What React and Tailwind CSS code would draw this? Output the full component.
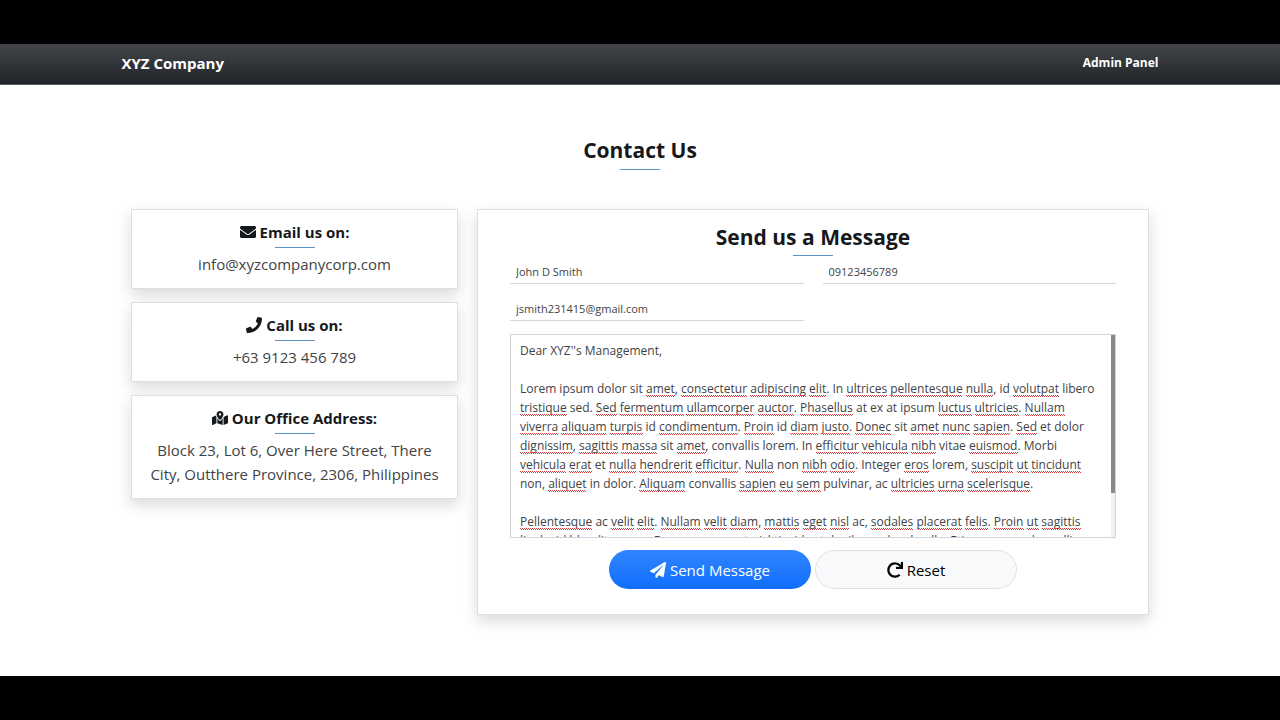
import React, { useLayoutEffect, useRef, useState } from "react";
import { FaEnvelope, FaPhone, FaMapMarkedAlt, FaPaperPlane, FaRedo } from "react-icons/fa";

// Words between underscores are the ones the spell checker flags.
const MESSAGE = `Dear XYZ''s Management,

Lorem ipsum dolor sit _amet_, _consectetur_ _adipiscing_ _elit_. In _ultrices_ _pellentesque_ _nulla_, id _volutpat_ libero _tristique_ sed. _Sed_ _fermentum_ _ullamcorper_ _auctor_. _Phasellus_ at ex at ipsum _luctus_ _ultricies_. _Nullam_ _viverra_ _aliquam_ _turpis_ id _condimentum_. _Proin_ id _diam_ _justo_. _Donec_ sit _amet_ _nunc_ _sapien_. _Sed_ et dolor _dignissim_, _sagittis_ _massa_ sit _amet_, convallis lorem. In _efficitur_ _vehicula_ _nibh_ vitae _euismod_. Morbi _vehicula_ _erat_ et _nulla_ _hendrerit_ _efficitur_. _Nulla_ non _nibh_ _odio_. Integer _eros_ lorem, _suscipit_ _ut_ _tincidunt_ non, _aliquet_ in dolor. _Aliquam_ convallis _sapien_ _eu_ _sem_ pulvinar, ac _ultricies_ _urna_ _scelerisque_.

_Pellentesque_ ac _velit_ _elit_. _Nullam_ _velit_ _diam_, _mattis_ _eget_ _nisl_ ac, _sodales_ _placerat_ _felis_. _Proin_ _ut_ _sagittis_ ligula, id blandit massa. Donec ac urna et nisl tincidunt dapibus vel sed nulla. Etiam commodo mollis lacus, sed dictum velit porta vel. Vivamus non lorem vitae dolor luctus tempor. Integer eu mauris in sapien tempus feugiat at non purus.`;

const pieces = MESSAGE.split("_");
const plainMessage = pieces.join("");

const lineStyle = "mx-auto h-px w-10 bg-[#5c93c4]";
const cardStyle = "border border-[#dfdfdf] bg-white shadow-[0_6px_14px_rgba(0,0,0,0.15)]";
const messageText =
  "h-[204px] w-full border pt-[6px] pr-[15px] pb-[5px] pl-[9px] text-[12px] leading-[19px] whitespace-pre-wrap break-words";

function InfoCard({ icon: Icon, title, children }) {
  return (
    <section className={`${cardStyle} px-3 pt-[11px] pb-3 text-center`}>
      <h2 className="flex items-center justify-center gap-1 text-[15px] leading-[22px] font-bold">
        <Icon className="size-4" aria-hidden="true" />
        {title}
      </h2>
      <div className={`${lineStyle} mt-1 mb-1`} />
      <div className="text-[15px] leading-6 text-[#3f4346]">{children}</div>
    </section>
  );
}

function Field({ label, ...props }) {
  return (
    <input
      aria-label={label}
      className="h-6 w-full min-w-0 border-b border-[#d5d8db] px-[6px] text-[11px] leading-4 text-[#3f4346] outline-none"
      {...props}
    />
  );
}

// Two rows of alternating dots, the shape of a small spelling mark.
function squiggle(x, y, width) {
  let d = "";
  for (let dx = 0; dx < width; dx += 1) {
    d += `M${x + dx} ${y + 0.5 + (dx % 2)}h1`;
  }
  return d;
}

function MessageBox() {
  const measure = useRef(null);
  const field = useRef(null);
  const [marks, setMarks] = useState([]);
  const [edited, setEdited] = useState(false);
  const [scroll, setScroll] = useState({ top: 0, view: 1, full: 1 });

  const readScroll = () => {
    const el = field.current;
    setScroll({ top: el.scrollTop, view: el.clientHeight, full: el.scrollHeight });
  };

  useLayoutEffect(() => {
    const update = () => {
      const box = measure.current;
      const origin = box.getBoundingClientRect();
      const words = [...box.querySelectorAll("span")];
      setMarks(
        words.map((word) => {
          const r = word.getBoundingClientRect();
          return squiggle(
            Math.round(r.left - origin.left),
            Math.round(r.bottom - origin.top) - 2,
            Math.round(r.width)
          );
        })
      );
      readScroll();
    };
    update();
    const observer = new ResizeObserver(update);
    observer.observe(field.current);
    return () => observer.disconnect();
  }, []);

  return (
    <div className="relative mt-[13px]">
      <textarea
        ref={field}
        aria-label="Message"
        defaultValue={plainMessage}
        spellCheck={false}
        onChange={() => { setEdited(true); readScroll(); }}
        onScroll={readScroll}
        className={`${messageText} block resize-none overflow-y-scroll border-[#ced4da] text-[#3f4346] outline-none [scrollbar-width:none]`}
      />
      <div
        ref={measure}
        aria-hidden="true"
        className={`${messageText} pointer-events-none invisible absolute inset-0 overflow-hidden border-transparent`}
      >
        {pieces.map((piece, i) => (i % 2 ? <span key={i}>{piece}</span> : piece))}
      </div>
      <div className="pointer-events-none absolute inset-px overflow-hidden" aria-hidden="true">
        {!edited && (
          <svg
            className="absolute inset-0 size-full overflow-visible"
            style={{ transform: `translate(-1px, ${-1 - scroll.top}px)` }}
            fill="none"
            stroke="#d63a3a"
            strokeWidth="1"
          >
            <path d={marks.join("")} />
          </svg>
        )}
        <div className="absolute inset-y-0 right-0 w-1 bg-[#f1f1f1]">
          <div
            className="w-full bg-[#888888]"
            style={{
              height: `${(scroll.view / scroll.full) * 100}%`,
              marginTop: `${(scroll.top / scroll.full) * scroll.view}px`,
            }}
          />
        </div>
      </div>
    </div>
  );
}

export default function App() {
  return (
    <div className="flex min-h-screen flex-col bg-black py-11 font-['Open_Sans','Noto_Sans',sans-serif] text-[#16191c]">
      <header className="border-b border-[#55585b] bg-linear-to-b from-[#424649] to-[#212529] text-white">
        <nav className="mx-auto flex h-10 w-full max-w-[1037px] items-center justify-between pb-[2px] font-bold">
          <a href="#home" className="text-[15px] leading-6">XYZ Company</a>
          <a href="#admin" className="text-[12px] leading-6">Admin Panel</a>
        </nav>
      </header>

      <main className="grow bg-white pt-12">
        <h1 className="mb-[2px] text-center text-[21px] leading-[34px] font-bold">Contact Us</h1>
        <div className={lineStyle} />

        <div className="mx-auto mt-[39px] grid w-full max-w-[1018px] grid-cols-[327fr_672fr] items-start gap-[19px]">
          <div className="grid gap-[13px]">
            <InfoCard icon={FaEnvelope} title="Email us on:">info@xyzcompanycorp.com</InfoCard>
            <InfoCard icon={FaPhone} title="Call us on:">+63 9123 456 789</InfoCard>
            <InfoCard icon={FaMapMarkedAlt} title="Our Office Address:">
              Block 23, Lot 6, Over Here Street, There City, Outthere Province, 2306, Philippines
            </InfoCard>
          </div>

          <section className={`${cardStyle} px-8 pt-3 pb-[25px]`}>
            <h2 className="mb-[3px] text-center text-[21px] leading-[30px] font-bold">Send us a Message</h2>
            <div className={lineStyle} />
            <form onSubmit={(e) => e.preventDefault()}>
              <div className="mt-1 grid grid-cols-2 gap-x-[19px] gap-y-[13px]">
                <Field label="Full name" type="text" defaultValue="John D Smith" />
                <Field label="Contact number" type="tel" defaultValue="09123456789" />
                <Field label="Email" type="email" defaultValue="jsmith231415@gmail.com" />
              </div>
              <MessageBox />
              <div className="mt-3 flex justify-center gap-1 text-[15px] leading-6">
                <button type="submit" className="flex h-[39px] w-1/3 items-center justify-center gap-1 rounded-full bg-linear-to-b from-[#3085fd] to-[#0d6efd] text-white">
                  <FaPaperPlane className="size-4" aria-hidden="true" />
                  Send Message
                </button>
                <button type="reset" className="flex h-[39px] w-1/3 items-center justify-center gap-1 rounded-full border border-[#dee2e6] bg-[#f8f9fa] text-black">
                  <FaRedo className="size-4" aria-hidden="true" />
                  Reset
                </button>
              </div>
            </form>
          </section>
        </div>
      </main>
    </div>
  );
}
